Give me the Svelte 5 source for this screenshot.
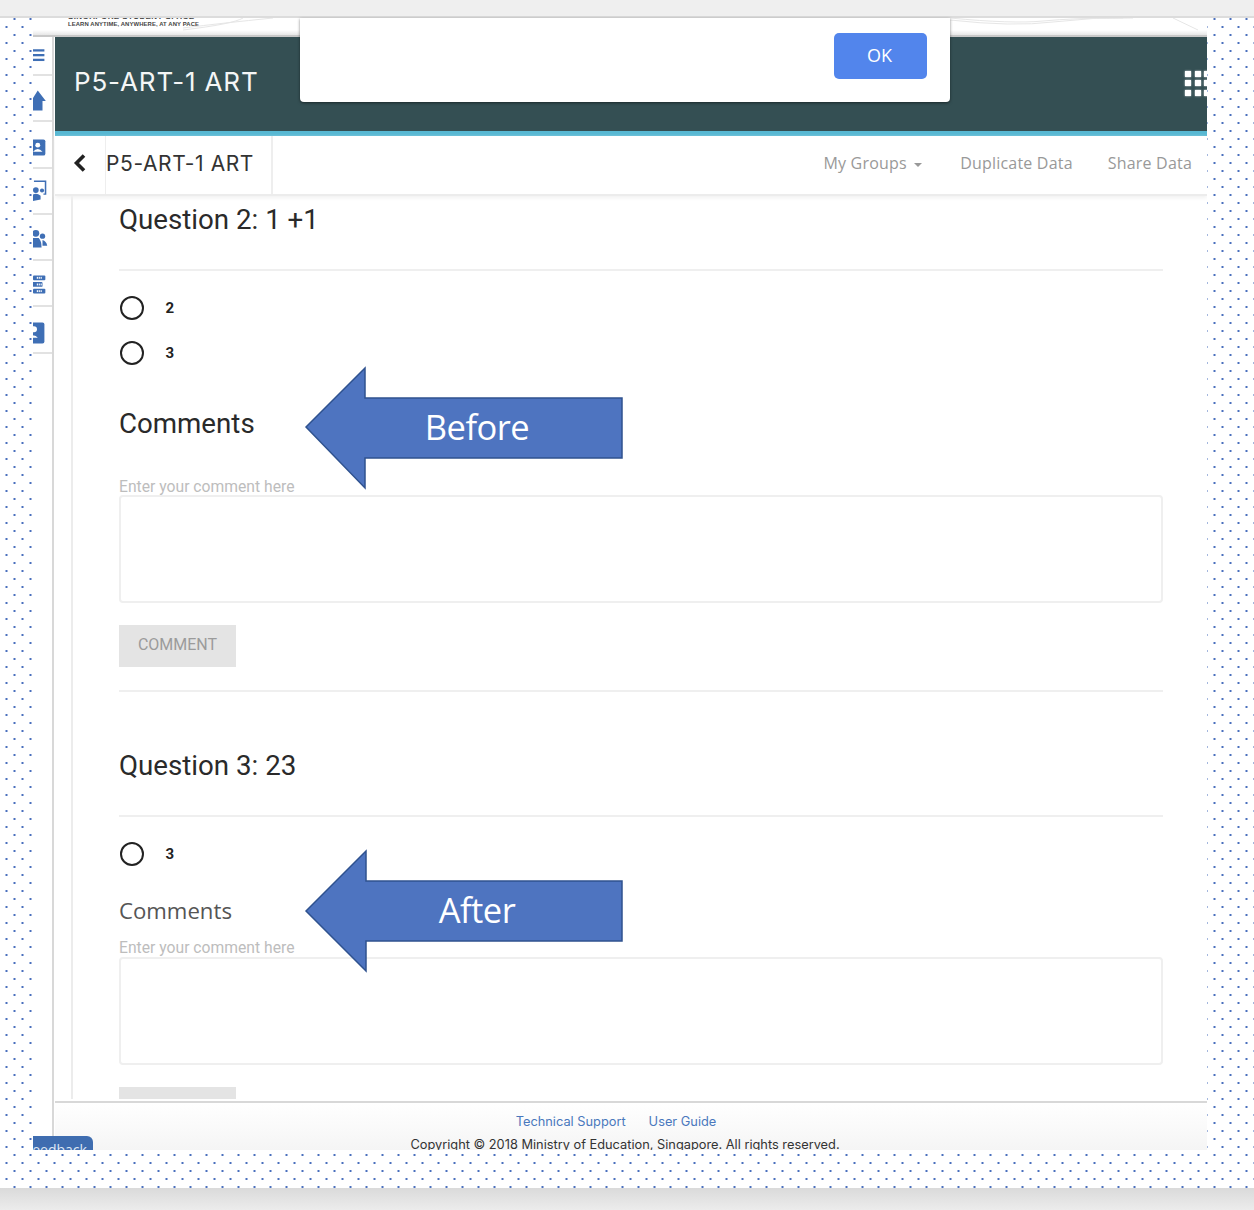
<script>
  // sidebar icons, each drawn in a 20x30 box; the rail clips their left edge
  const railIcons = ["menu", "pin", "card", "board", "people", "rows", "book"];

  const questions = [
    { title: "Question 2: 1 +1", options: ["2", "3"], variant: "before" },
    { title: "Question 3: 23", options: ["3"], variant: "after" }
  ];
</script>

<div class="page">
  <div class="top-chrome"></div>

  <div class="stage">
    <div class="app">
      <div class="brand">
        <div class="brand-mark">
          <span class="brand-name">SINGAPORE STUDENT SPACE</span>
          <span class="brand-tag">LEARN ANYTIME, ANYWHERE, AT ANY PACE</span>
        </div>
        <svg class="waves" width="1174" height="18" viewBox="0 0 1174 18" fill="none" stroke="#e6e6e6">
          <path d="M150 10 Q190 5 240 0" />
          <path d="M150 12 Q200 6 210 0" />
          <path d="M917 0 Q980 6 1010 3 T1090 0" />
          <path d="M917 2 Q980 9 1020 4 T1100 0" />
          <path d="M1140 0 L1165 12" />
        </svg>
      </div>

      <div class="body">
        <nav class="rail">
          {#each railIcons as icon}
            <div class="rail-item">
              <svg class="icon-{icon}" width="20" height="30" viewBox="0 0 20 30" fill="#3f6fb5">
                {#if icon === "menu"}
                  <rect x="0" y="10" width="12" height="2.4" />
                  <rect x="0" y="15" width="12" height="2.4" />
                  <rect x="0" y="20" width="12" height="2.4" />
                {:else if icon === "pin"}
                  <path d="M5 4 L13.5 15 L10 15 L10 25 L0 25 L0 15 L-2 15 Z" />
                {:else if icon === "card"}
                  <rect x="-3" y="6" width="16" height="17" rx="2" />
                  <circle cx="5" cy="12" r="2.6" fill="#fff" />
                  <path d="M0 19 Q5 13 10 19 Z" fill="#fff" />
                {:else if icon === "board"}
                  <path d="M1 4 H14 V19 H11 V17.5 H12.4 V5.5 H1 Z" />
                  <circle cx="3" cy="14" r="3" />
                  <circle cx="9.5" cy="14.5" r="2.2" />
                  <path d="M-2 26 V20 Q3 16 8 20 V24 Z" />
                {:else if icon === "people"}
                  <circle cx="3" cy="9" r="3.6" />
                  <circle cx="10" cy="12" r="2.8" />
                  <path d="M-2 24 V14 H6 Q9 17 9 24 Z" />
                  <path d="M10 16 Q14 17 15 22 H10 Z" />
                {:else if icon === "rows"}
                  {#each [6, 13, 20] as y, i}
                    <rect x={i === 1 ? -2 : 0} {y} width={i === 1 ? 12 : 13} height="5" rx="1" />
                    <rect x="4" y={y + 1.5} width="1.2" height="2" fill="#fff" />
                    <rect x="6" y={y + 1.5} width="1.2" height="2" fill="#fff" />
                    <rect x="8" y={y + 1.5} width="1.2" height="2" fill="#fff" />
                  {/each}
                {:else}
                  <path d="M-2 4 H10 Q12 4 12 6 V24 Q12 26 10 26 H-2 Z" />
                  <circle cx="1" cy="11" r="3.2" fill="#fff" />
                  <path d="M-3 20 Q1 15 5 20 Z" fill="#fff" />
                {/if}
              </svg>
            </div>
          {/each}
          <div class="feedback"><span>Feedback</span></div>
        </nav>

        <div class="main">
          <header class="banner">
            <h1>P5-ART-1 ART</h1>
            <div class="apps">
              {#each Array(9) as _}
                <i></i>
              {/each}
            </div>
          </header>

          <div class="subnav">
            <div class="back">
              <svg width="14" height="20" viewBox="0 0 14 20">
                <path d="M11 2.5 L3.5 10 L11 17.5" fill="none" stroke="#222" stroke-width="3.6" />
              </svg>
            </div>
            <div class="crumb">P5-ART-1 ART</div>
            <div class="links">
              <span>My Groups <b class="caret"></b></span>
              <span>Duplicate Data</span>
              <span>Share Data</span>
            </div>
          </div>

          <div class="scroll">
            <div class="card">
              {#each questions as q}
                <section class="question {q.variant}">
                  <h2>{q.title}</h2>
                  <hr />
                  <div class="options">
                    {#each q.options as opt}
                      <label class="option"><span class="radio"></span><span>{opt}</span></label>
                    {/each}
                  </div>
                  <h3>Comments</h3>
                  <div class="hint">Enter your comment here</div>
                  <div class="textarea"></div>
                  <div class="comment-btn">COMMENT</div>
                  <hr class="end" />
                </section>
              {/each}
            </div>
          </div>

          <footer class="footer">
            <div class="foot-links">
              <span>Technical Support</span>
              <span>User Guide</span>
            </div>
            <div class="copy">Copyright © 2018 Ministry of Education, Singapore. All rights reserved.</div>
          </footer>
        </div>
      </div>
    </div>
  </div>

  <div class="bottom-chrome"></div>

  <div class="modal">
    <div class="ok">OK</div>
  </div>

  <div class="arrow arrow-before">
    <svg width="320" height="124" viewBox="0 0 320 124">
      <path d="M2 61 L61 2 V32 H318 V92 H61 V122 Z" fill="#4e74c0" stroke="#2f528f" stroke-width="1.5" />
    </svg>
    <span>Before</span>
  </div>
  <div class="arrow arrow-after">
    <svg width="320" height="124" viewBox="0 0 320 124">
      <path d="M2 62 L62 2 V32 H318 V92 H62 V122 Z" fill="#4e74c0" stroke="#2f528f" stroke-width="1.5" />
    </svg>
    <span>After</span>
  </div>
</div>

<style>
  :global(body) {
    margin: 0;
    background: #fff;
  }

  .page {
    position: relative;
    width: 1254px;
    height: 1210px;
    overflow: hidden;
    display: flex;
    flex-direction: column;
    font-family: "Open Sans", "Noto Sans", sans-serif;
  }

  .top-chrome {
    height: 16px;
    flex: none;
    background: #efefef;
    border-bottom: 2px solid #dcdcdc;
  }

  .stage {
    flex: 1;
    min-height: 0;
    padding: 0 47px 38px 33px;
    background-color: #fff;
    background-image: url("data:image/svg+xml,%3Csvg xmlns='http://www.w3.org/2000/svg' width='16' height='16'%3E%3Crect x='13.5' y='0' width='2' height='2' fill='%234a6fbd'/%3E%3Crect x='5.5' y='8' width='2' height='2' fill='%234a6fbd'/%3E%3C/svg%3E");
    background-size: 16px 16px;
  }

  .bottom-chrome {
    height: 22px;
    flex: none;
    background: linear-gradient(#dadada, #ececec);
  }

  .app {
    height: 100%;
    display: flex;
    flex-direction: column;
    background: #fff;
    overflow: hidden;
  }

  .brand {
    position: relative;
    height: 19px;
    flex: none;
    overflow: hidden;
    background: linear-gradient(#fff 70%, #e6e6e6);
    border-bottom: 2px solid #c8c8c8;
    box-sizing: border-box;
  }

  .waves {
    position: absolute;
    left: 0;
    top: 0;
  }

  .brand-mark {
    width: 160px;
    margin: -6px 0 0 35px;
    display: flex;
    flex-direction: column;
    font-family: "Liberation Sans", sans-serif;
    color: #444;
    font-weight: 700;
    white-space: nowrap;
  }

  .brand-name {
    font-size: 8px;
    line-height: 9px;
    letter-spacing: 0.4px;
  }

  .brand-tag {
    font-size: 5.9px;
    line-height: 7px;
    letter-spacing: 0.1px;
  }

  .body {
    flex: 1;
    min-height: 0;
    display: flex;
  }

  .rail {
    position: relative;
    width: 19px;
    flex: none;
    margin-right: 1px;
    border-right: 2px solid #d8d8d8;
  }

  .rail-item {
    height: 46.3px;
    overflow: hidden;
    box-sizing: border-box;
    border-bottom: 2px solid #e2e2e2;
    display: flex;
    align-items: center;
  }

  .rail-item:first-child {
    height: 39px;
  }

  .icon-menu {
    margin-top: -4px;
  }

  .icon-pin {
    margin-top: 6px;
  }

  .icon-card {
    margin-top: 8px;
  }

  .icon-people {
    margin-top: 4px;
  }

  .icon-rows {
    margin-top: 2px;
  }

  .icon-book {
    margin-top: 6px;
  }

  .feedback {
    position: absolute;
    left: 0;
    bottom: 0;
    width: 60px;
    height: 14px;
    background: #3f6db0;
    border-radius: 0 6px 0 0;
    overflow: hidden;
    color: #dfe8f5;
    font-size: 14px;
    line-height: 22px;
    z-index: 2;
  }

  .feedback span {
    display: block;
    margin-left: -8px;
    margin-top: 3px;
  }

  .main {
    flex: 1;
    min-width: 0;
    display: flex;
    flex-direction: column;
  }

  .banner {
    height: 94px;
    flex: none;
    background: #344f53;
    border-bottom: 5px solid #57b8d3;
    display: flex;
    align-items: center;
    justify-content: space-between;
    overflow: hidden;
  }

  h1 {
    margin: 0 0 6px 19px;
    color: #f4f6f6;
    font-family: Inter, sans-serif;
    font-size: 26px;
    font-weight: 400;
    letter-spacing: 0.85px;
  }

  .apps {
    flex: none;
    display: grid;
    grid-template-columns: repeat(3, 6px);
    gap: 3.5px;
    margin-right: -3px;
    margin-bottom: 2px;
  }

  .apps i {
    height: 6px;
    background: #fff;
    box-shadow: 0 0 2px #fff;
  }

  .subnav {
    height: 60px;
    flex: none;
    display: flex;
    align-items: center;
    box-sizing: border-box;
    border-bottom: 2px solid #ececec;
    box-shadow: 0 2px 4px #f1f1f1;
    background: #fff;
    position: relative;
    z-index: 1;
  }

  .back {
    width: 51px;
    height: 100%;
    box-sizing: border-box;
    border-right: 1px solid #eee;
    display: flex;
    align-items: center;
    justify-content: center;
    padding-bottom: 4px;
  }

  .crumb {
    width: 167px;
    height: 100%;
    box-sizing: border-box;
    border-right: 2px solid #eee;
    display: flex;
    align-items: center;
    font-family: Inter, sans-serif;
    font-size: 21px;
    letter-spacing: 0.6px;
    color: #333;
    padding-bottom: 4px;
  }

  .links {
    margin-left: auto;
    padding-right: 15px;
    padding-bottom: 4px;
    display: flex;
    gap: 35px;
    color: #999;
    font-size: 16px;
    letter-spacing: 0.2px;
  }

  .caret {
    display: inline-block;
    margin-left: 3px;
    margin-right: 3px;
    vertical-align: middle;
    border-top: 4px solid #999;
    border-left: 4px solid transparent;
    border-right: 4px solid transparent;
  }

  .scroll {
    height: 903px;
    flex: none;
    overflow: hidden;
    padding-left: 16px;
  }

  .card {
    border-left: 2px solid #ececec;
    padding: 4px 44px 0 46px;
    height: 100%;
    box-sizing: border-box;
    font-family: Roboto, sans-serif;
  }

  h2 {
    margin: 0;
    font-size: 27.7px;
    font-weight: 400;
    line-height: 40px;
    color: #2a2a2a;
  }

  .question hr {
    border: none;
    border-top: 2px solid #efefef;
    margin: 29px 0 0;
  }

  .options {
    margin-top: 25px;
    display: flex;
    flex-direction: column;
    gap: 21px;
  }

  .option {
    display: flex;
    align-items: center;
    gap: 21.5px;
    padding-left: 1px;
    font-size: 15px;
    font-weight: 700;
    color: #222;
    height: 24px;
  }

  .radio {
    width: 24px;
    height: 24px;
    box-sizing: border-box;
    border: 2px solid #222;
    border-radius: 50%;
  }

  h3 {
    margin: 39px 0 0;
    font-size: 27.7px;
    font-weight: 400;
    line-height: 40px;
    color: #2a2a2a;
  }

  .hint {
    margin-top: 33px;
    font-size: 15.7px;
    line-height: 20px;
    color: #bdbdbd;
  }

  .textarea {
    height: 108px;
    margin-top: -2px;
    box-sizing: border-box;
    border: 2px solid #efefef;
    border-radius: 4px;
  }

  .comment-btn {
    margin-top: 22px;
    padding-bottom: 3px;
    box-sizing: border-box;
    width: 117px;
    height: 42px;
    background: #e4e4e4;
    color: #9b9b9b;
    font-size: 16px;
    display: flex;
    align-items: center;
    justify-content: center;
  }

  .question hr.end {
    margin-top: 23px;
  }

  .question + .question {
    margin-top: 54px;
  }

  .after .options {
    margin-top: 25px;
  }

  .after h3 {
    margin-top: 29px;
    font-family: "Open Sans", sans-serif;
    font-size: 22.2px;
    line-height: 32px;
    color: #555;
  }

  .after .hint {
    margin-top: 11px;
  }

  .after .textarea {
    margin-top: -1px;
    height: 108px;
  }

  .after .comment-btn {
    margin-top: 22px;
  }

  .footer {
    flex: 1;
    min-height: 0;
    margin-top: 2px;
    overflow: hidden;
    border-top: 2px solid #d8d8d8;
    background: linear-gradient(#fff, #f5f5f5);
    text-align: center;
    font-family: Inter, sans-serif;
    font-size: 12.8px;
  }

  .foot-links {
    margin-top: 9px;
    display: flex;
    justify-content: center;
    gap: 23px;
    color: #4a78bd;
    line-height: 20px;
    padding-right: 30px;
  }

  .copy {
    margin-top: 3px;
    padding-right: 12px;
    line-height: 20px;
    color: #333;
    white-space: nowrap;
  }

  .modal {
    position: absolute;
    left: 300px;
    top: 18px;
    width: 650px;
    height: 84px;
    box-sizing: border-box;
    background: #fff;
    border-radius: 0 0 4px 4px;
    box-shadow: 0 1px 3px rgba(0, 0, 0, 0.5);
    display: flex;
    justify-content: flex-end;
    padding: 15px 23px 0 0;
    z-index: 3;
  }

  .ok {
    width: 93px;
    height: 46px;
    box-sizing: border-box;
    padding: 0 2px 2px 0;
    border-radius: 5px;
    background: #5285ec;
    color: #fff;
    font-size: 18px;
    display: flex;
    align-items: center;
    justify-content: center;
  }

  .arrow {
    position: absolute;
    left: 304px;
    width: 320px;
    height: 124px;
    z-index: 2;
  }

  .arrow-before {
    top: 366px;
  }

  .arrow-after {
    top: 849px;
  }

  .arrow svg {
    display: block;
  }

  .arrow span {
    position: absolute;
    left: 26px;
    right: 0;
    top: -2px;
    height: 124px;
    display: flex;
    align-items: center;
    justify-content: center;
    color: #fff;
    font-family: "Open Sans", sans-serif;
    font-size: 34.5px;
    letter-spacing: -0.5px;
  }
</style>
